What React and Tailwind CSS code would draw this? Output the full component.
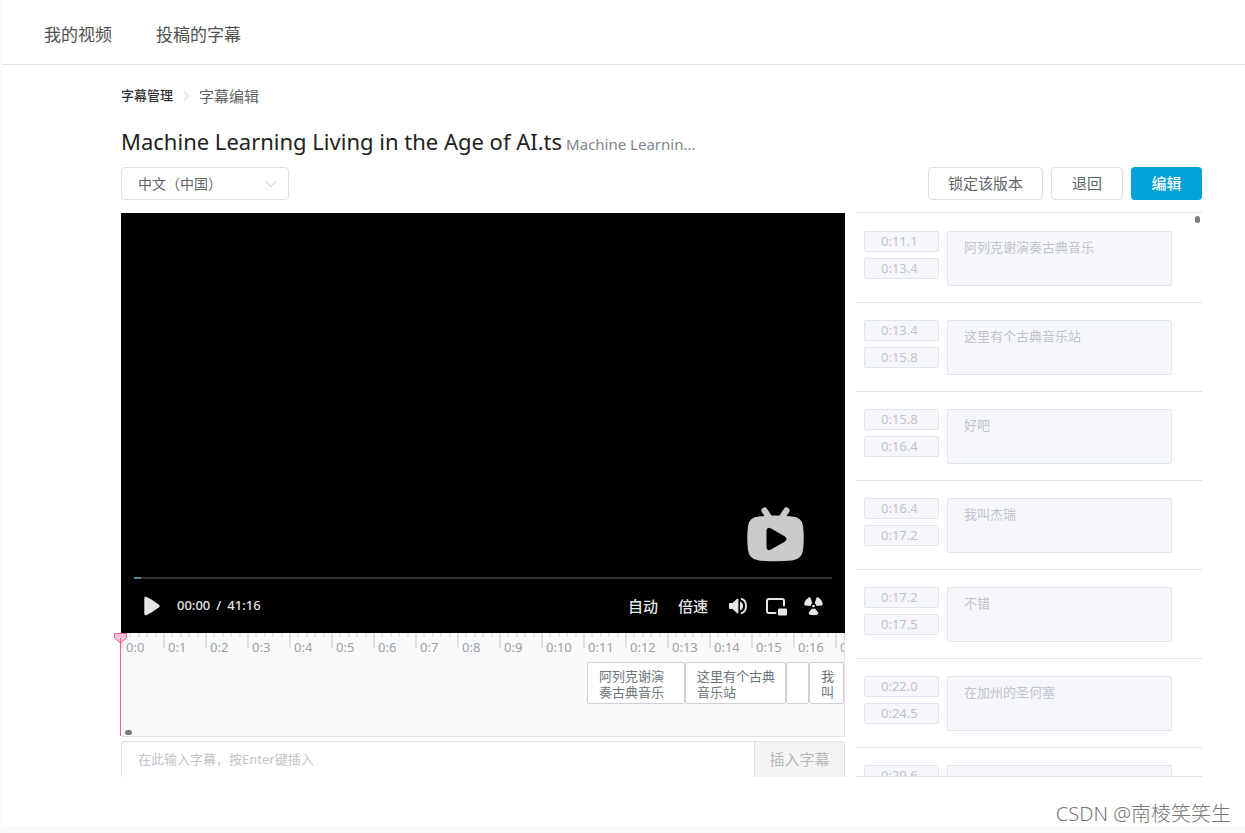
// src/pages/SubtitleEditor.jsx
import { useState } from 'react'

const NAV = ['我的视频', '投稿的字幕']

const LINES = [
  { from: '0:11.1', to: '0:13.4', text: '阿列克谢演奏古典音乐' },
  { from: '0:13.4', to: '0:15.8', text: '这里有个古典音乐站' },
  { from: '0:15.8', to: '0:16.4', text: '好吧' },
  { from: '0:16.4', to: '0:17.2', text: '我叫杰瑞' },
  { from: '0:17.2', to: '0:17.5', text: '不错' },
  { from: '0:22.0', to: '0:24.5', text: '在加州的圣何塞' },
  { from: '0:29.6', to: '0:31.2', text: '' },
]

// blocks on the timeline, width in px (42px = 1s)
const BLOCKS = [
  { text: '阿列克谢演奏古典音乐', width: 98 },
  { text: '这里有个古典音乐站', width: 101 },
  { text: '', width: 23 },
  { text: '我叫', width: 35 },
]

const SECONDS = Array.from({ length: 18 }, (_, i) => i)

function TvLogo() {
  return (
    <svg className="w-[57px] h-[55px]" viewBox="0 0 57 55" aria-hidden="true">
      <path d="M17.500 3.500L22.500 11M39.500 3.500L34.500 11"
            stroke="#cacaca" strokeWidth="6" strokeLinecap="round"/>
      <path fill="#cacaca" fillRule="evenodd"
            d="M12 9.500Q28.500 7.500 45 9.500Q55 10 56 19Q57.500 31 56 43Q55 52.500 45 53.500
               Q28.500 55 12 53.500Q2 52.500 1 43Q-.5 31 1 19Q2 10 12 9.500Z
               M19.500 23.500V40.500Q20 44.500 24 42.500L38 34.500Q41 32 38 29.500L24 21.500Q20 19.500 19.500 23.500Z"/>
    </svg>
  )
}

function PlayIcon() {
  return (
    <svg className="w-4 h-5" viewBox="0 0 16 20" fill="#e6e6e6" aria-hidden="true">
      <path d="M.3 2Q.5.2 2.300.8Q9 4 15 8.700Q16.300 10 15 11.300Q9 16 2.300 19.200Q.5 19.800.3 18Z"/>
    </svg>
  )
}

function VolumeIcon() {
  return (
    <svg className="w-[22px] h-5" viewBox="0 0 22 20" fill="none" aria-hidden="true">
      <path fill="#e6e6e6" d="M2 7H4.500L8.800 2.900Q10.300 2 10.400 3.600V16.400Q10.300 18 8.800 17.100L4.500 13H2Q1 13 1 12V8Q1 7 2 7Z"/>
      <path fill="#e6e6e6" d="M12 5.500Q15 7 15 10T12 14.500Z"/>
      <path stroke="#e6e6e6" strokeWidth="1.800" strokeLinecap="round" d="M13.500 2.800C19.500 4.500 19.500 15.500 13.500 17.200"/>
    </svg>
  )
}

function PipIcon() {
  return (
    <svg className="w-[22px] h-5" viewBox="0 0 22 20" fill="none" aria-hidden="true">
      <path stroke="#e6e6e6" strokeWidth="2" strokeLinecap="round"
            d="M18 9.500V5Q18 3 16 3H3Q1 3 1 5V15Q1 17 3 17H9.500"/>
      <rect x="12" y="12.500" width="9" height="7" rx="1" fill="#e6e6e6"/>
    </svg>
  )
}

function DanmakuFanIcon() {
  return (
    <svg className="w-5 h-5" viewBox="0 0 20 20" fill="#e6e6e6" aria-hidden="true">
      <circle cx="9.500" cy="10" r="1.300"/>
      <path d="M4.600 1.500Q6.500.8 6.900 2.700L8.300 7.200Q6.700 8.300 6.600 10L1.200 9.600Q-.3 9 .5 6.800Q1.700 3.300 4.600 1.500Z"/>
      <path d="M14.400 1.500Q12.500.8 12.100 2.700L10.700 7.200Q12.300 8.300 12.400 10L17.800 9.600Q19.300 9 18.500 6.800Q17.300 3.300 14.400 1.500Z"/>
      <path d="M8 12.400Q9.500 13.200 11 12.400L14.200 16.500Q14.800 18.200 13 18.700Q9.500 19.600 6 18.700Q4.200 18.200 4.800 16.500Z"/>
    </svg>
  )
}

function Player() {
  return (
    <div className="flex flex-col justify-end h-[420px] bg-black">
      <div className="flex justify-end pr-[41px] pb-[15px]">
        <TvLogo/>
      </div>
      {/* progress */}
      <div className="flex h-0.5 mx-[13px] bg-[#333333]">
        <div className="w-0.5 bg-[#00a1d6]"/>
        <div className="w-[5px] bg-[#777777]"/>
      </div>
      <div className="flex items-center justify-between h-[54px] pl-[23px] pr-[21px]
                      text-[#e6e6e6] font-medium">
        <div className="flex items-center gap-[17px]">
          <button type="button" aria-label="播放"><PlayIcon/></button>
          <div className="flex gap-[6px] text-[13px]">
            <span>00:00</span>
            <span>/</span>
            <span>41:16</span>
          </div>
        </div>
        <div className="flex items-center gap-5 text-[15px]">
          <button type="button">自动</button>
          <button type="button">倍速</button>
          <div className="flex gap-4">
            <button type="button" aria-label="音量"><VolumeIcon/></button>
            <button type="button" aria-label="画中画"><PipIcon/></button>
            <button type="button" aria-label="弹幕"><DanmakuFanIcon/></button>
          </div>
        </div>
      </div>
    </div>
  )
}

function Timeline() {
  return (
    <div className="relative">
      <div className="h-[104px] bg-[#fafafa] border-r border-b border-[#e1e2ea] overflow-hidden">
        {/* ruler */}
        <div className="flex">
          {SECONDS.map(s => (
            <div key={s} className="shrink-0 w-[42px] h-[29px]">
              <div className="grid grid-cols-5 h-1">
                <i className="w-0.5 h-[15px] bg-[#e0e1e8]"/>
                <i className="w-0.5 h-1 bg-[#e5e5ea]"/>
                <i className="w-0.5 h-1 bg-[#e5e5ea]"/>
                <i className="w-0.5 h-1 bg-[#e5e5ea]"/>
                <i className="w-0.5 h-1 bg-[#e5e5ea]"/>
              </div>
              <span className="block pl-[5px] text-[13px] leading-5 text-[#99a2aa]">0:{s}</span>
            </div>
          ))}
        </div>
        {/* subtitle blocks */}
        <div className="flex justify-end">
          {BLOCKS.map((b, i) => (
            <div key={i} style={{ width: b.width }}
                 className="h-[42px] pl-[11px] pr-2.5 py-[5px] bg-white border border-[#ccd0d7]
                            rounded-xs text-[13px] leading-4 text-[#6d757a] overflow-hidden">
              {b.text}
            </div>
          ))}
        </div>
      </div>
      {/* playhead */}
      <svg className="absolute -left-[7px] top-0 w-[13px] h-[103px]" viewBox="0 0 13 103" aria-hidden="true">
        <path d="M.5.5H12.500V5L6.500 10L.5 5Z" fill="#f9c3d5" stroke="#f25d8e"/>
        <path d="M6.500 5V103" stroke="#f25d8e"/>
      </svg>
      <div className="absolute left-1 bottom-[2px] w-[7px] h-[5px] rounded-full bg-[#7b7b7b]"/>
    </div>
  )
}

function LineRow({ line }) {
  return (
    <li className="flex gap-2 h-[89px] pt-[17px] pl-2 pr-[30px] border-b border-[#e3e5ed]">
      <div className="flex flex-col gap-[6px] w-[75px]">
        {[line.from, line.to].map((t, i) => (
          <input key={i} disabled defaultValue={t} aria-label={i ? '结束时间' : '开始时间'}
                 className="w-full h-[21px] px-4 pb-0.5 bg-[#f5f7fa] border border-[#e2e5ed]
                            rounded-xs text-[13px] text-[#c0c4cc]"/>
        ))}
      </div>
      <textarea disabled defaultValue={line.text} aria-label="字幕内容"
                className="flex-1 min-w-0 h-[55px] px-4 py-[5px] bg-[#f5f7fa] border border-[#e2e5ed]
                           rounded-xs text-[13px] leading-5 text-[#c0c4cc] resize-none overflow-hidden"/>
    </li>
  )
}

export default function SubtitleEditor() {
  const [lang, setLang] = useState('zh-CN')
  const [draft, setDraft] = useState('')

  return (
    <div className="min-h-screen flex flex-col pl-0.5 pb-[7px] bg-[#fafafa]
                    font-['Noto_Sans','Noto_Sans_CJK_SC',sans-serif]">
      <div className="relative flex-1 bg-white">

        {/* Top nav */}
        <header className="flex items-center h-[65px] pt-[6px] px-[42px] gap-11
                           border-b border-[#e5e5e5] text-[17px] text-[#505050]">
          {NAV.map(n => <a key={n} href="#">{n}</a>)}
        </header>

        <main className="pl-[119px] pr-[43px]">
          <nav className="flex items-center h-5 mt-[21px] gap-[9px]">
            <a href="#" className="text-[13px] font-medium text-[#303133]">字幕管理</a>
            <svg className="w-2 h-3" viewBox="0 0 8 12" fill="none" stroke="#c0c4cc" aria-hidden="true">
              <path d="M1.500 1L6.500 6L1.500 11"/>
            </svg>
            <span className="text-[15px] text-[#606266]">字幕编辑</span>
          </nav>

          <div className="flex items-baseline gap-1 mt-[19px] h-[34px]">
            <h1 className="text-[22px] leading-8 text-[#222222] whitespace-nowrap">
              Machine Learning Living in the Age of AI.ts
            </h1>
            <span className="text-[15px] text-[#80868c]">Machine Learnin...</span>
          </div>

          {/* Toolbar */}
          <div className="flex items-center justify-between mt-2 h-[33px]">
            <div className="relative w-[168px]">
              <select value={lang} onChange={e => setLang(e.target.value)} aria-label="字幕语言"
                      className="appearance-none w-full h-[33px] pl-4 border border-[#dcdfe6]
                                 rounded bg-white text-[14px] text-[#606266]">
                <option value="zh-CN">中文（中国）</option>
                <option value="en-US">英语（美国）</option>
              </select>
              <svg className="absolute right-3 top-[13px] w-3 h-2 pointer-events-none"
                   viewBox="0 0 12 8" fill="none" stroke="#c0c4cc" aria-hidden="true">
                <path d="M.5 1L6 6.500L11.500 1"/>
              </svg>
            </div>
            <div className="flex gap-2 text-[15px] text-[#606266]">
              <button type="button" className="h-[33px] px-[19px] border border-[#dcdfe6] rounded">锁定该版本</button>
              <button type="button" className="h-[33px] min-w-[72px] border border-[#dcdfe6] rounded">退回</button>
              <button type="button" className="h-[33px] min-w-[71px] rounded bg-[#00a1d6] text-white font-medium">编辑</button>
            </div>
          </div>

          <div className="flex gap-[11px] mt-3">
            <section className="flex-1 min-w-0 pt-px">
              <Player/>
              <Timeline/>
              <form className="flex h-9 mt-1" onSubmit={e => e.preventDefault()}>
                <input value={draft} onChange={e => setDraft(e.target.value)}
                       aria-label="字幕" placeholder="在此输入字幕，按Enter键插入"
                       className="flex-1 min-w-0 px-4 border-t border-l border-[#dcdfe6] rounded-tl
                                  text-[13px] placeholder:text-[#c0c4cc]"/>
                <button type="submit" disabled
                        className="w-[91px] border-t border-x border-[#dcdfe6] rounded-tr
                                   bg-[#f4f4f4] text-[15px] text-[#b8b8b8]">
                  插入字幕
                </button>
              </form>
            </section>

            {/* Line list */}
            <section className="relative w-[346px] h-[565px] border-y border-[#e3e5ed] overflow-hidden">
              <ul className="pt-px">
                {LINES.map(l => <LineRow key={l.from} line={l}/>)}
              </ul>
              <div className="absolute right-[2px] top-[3px] w-[5px] h-[7px] rounded-full bg-[#7b7b7b]"/>
            </section>
          </div>
        </main>

        <p className="absolute right-[14px] bottom-0 text-[20px] leading-6 font-light text-[#777777]">
          CSDN @南棱笑笑生
        </p>
      </div>
    </div>
  )
}
